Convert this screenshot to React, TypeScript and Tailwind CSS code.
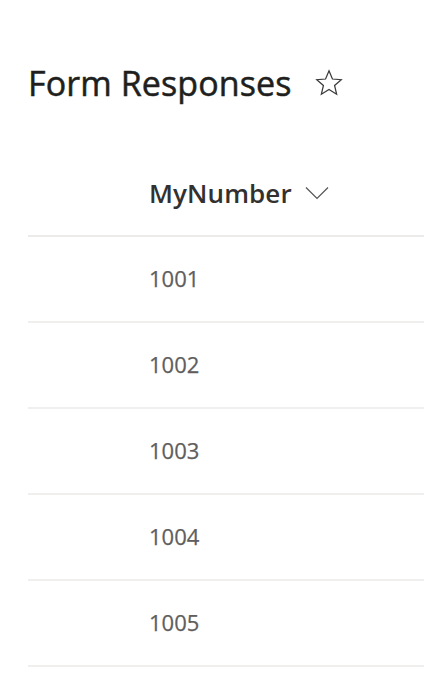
const rows = ["1001", "1002", "1003", "1004", "1005"];

export default function App() {
  return (
    <div className="min-h-[700px] bg-white font-['Open_Sans',sans-serif] overflow-hidden">
      {/* Title */}
      <div className="flex items-center gap-[22px] pl-[28px] pt-[56px] h-[110px]">
        <h1 className="text-[34px] leading-none text-[#201f1e] tracking-[0.1px] [-webkit-text-stroke:0.5px_#201f1e]">Form Responses</h1>
        <svg width="30" height="30" viewBox="0 0 24 24" fill="none" stroke="#3b3a39" strokeWidth="1" strokeLinejoin="miter">
          <path d="M12 2.2l2.75 6.6 7.05.55-5.35 4.65 1.65 6.95L12 17.2l-6.1 3.75 1.65-6.95L2.2 9.35l7.05-.55z" />
        </svg>
      </div>

      {/* Column header */}
      <div className="ml-[28px] flex items-center h-[127px] pt-[40px] pl-[121px] border-b-2 border-[#edebe9]">
        <span className="text-[26px] font-semibold text-[#323130] leading-none tracking-[0.1px]">MyNumber</span>
        <svg className="ml-[13px]" width="24" height="14" viewBox="0 0 24 14" fill="none" stroke="#555" strokeWidth="1.2">
          <path d="M1 1.5l11 11 11-11" />
        </svg>
      </div>

      {/* Rows */}
      {rows.map((n) => (
        <div key={n} className="ml-[28px] h-[86px] flex items-center pl-[121px] pb-[3px] border-b-2 border-[#f0efee]">
          <span className="text-[22px] text-[#5f5e5d] leading-none [-webkit-text-stroke:0.25px_#5f5e5d]">{n}</span>
        </div>
      ))}
    </div>
  );
}
